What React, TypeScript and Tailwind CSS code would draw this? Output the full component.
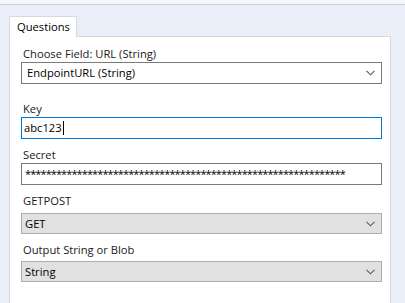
import type { ReactNode } from "react";

function Chevron() {
    return (
        <svg width="9" height="6" viewBox="0 0 9 6" className="shrink-0">
            <path d="M0.5 0.8 L4.5 4.8 L8.5 0.8" fill="none" stroke="#5a5a5a" strokeWidth="1.1" />
        </svg>
    );
}

function Label({ children, className }: { children: ReactNode; className?: string }) {
    return <div className={`h-4 leading-4 pl-[2px] text-[11.2px] text-[#1a1a1a] ${className ?? ""}`}>{children}</div>;
}

function Select({ value, disabled }: { value: string; disabled?: boolean }) {
    return (
        <div
            className={
                disabled
                    ? "flex h-[21px] items-center justify-between border border-[#adadad] bg-[#e1e1e1] pl-[3px] pr-[6px]"
                    : "flex h-[22px] items-center justify-between border border-[#7a7a7a] bg-white pl-[5px] pr-[6px]"
            }
        >
            <span className="text-[11.2px] leading-4 text-black">{value}</span>
            <Chevron />
        </div>
    );
}

export default function App() {
    return (
        <div
            className="h-[303px] w-[405px] overflow-hidden bg-[#f7f8fb]"
            style={{ fontFamily: '"Open Sans", "Noto Sans", sans-serif' }}
        >
            <div className="mt-[4px] h-full border-t border-[#cfcfcf] bg-[#e9eef8] pl-[9px] pr-[14px] pt-[11px]">
                <div className="relative z-10 flex h-[21px] w-[68px] items-center border border-b-0 border-[#d9d9d9] bg-white pl-[7px] text-[11.2px] text-black">
                    Questions
                </div>
                <div className="-mt-px h-[300px] border border-[#d9d9d9] bg-white pl-[11px] pr-[8px] pt-[9px]">
                    <Label>Choose Field: URL (String)</Label>
                    <Select value="EndpointURL (String)" />

                    <Label className="mt-[17px]">Key</Label>
                    <div className="flex h-[22px] items-center border border-[#0078d7] bg-white pl-[2px]">
                        <span className="text-[11.2px] leading-4 text-black">abc123</span>
                        <span className="ml-px h-[14px] w-px bg-black" />
                    </div>

                    <Label className="mt-[8px]">Secret</Label>
                    <div className="flex h-[22px] items-center overflow-hidden border border-[#7a7a7a] bg-white pl-[3px]">
                        <span className="whitespace-nowrap text-[11px] leading-4 tracking-[-0.9px] text-black">
                            {"*".repeat(62)}
                        </span>
                    </div>

                    <Label className="mt-[8px]">GETPOST</Label>
                    <div className="mt-[4px]">
                        <Select value="GET" disabled />
                    </div>

                    <Label className="mt-[8px]">Output String or Blob</Label>
                    <div className="mt-[3px]">
                        <Select value="String" disabled />
                    </div>
                </div>
            </div>
        </div>
    );
}
